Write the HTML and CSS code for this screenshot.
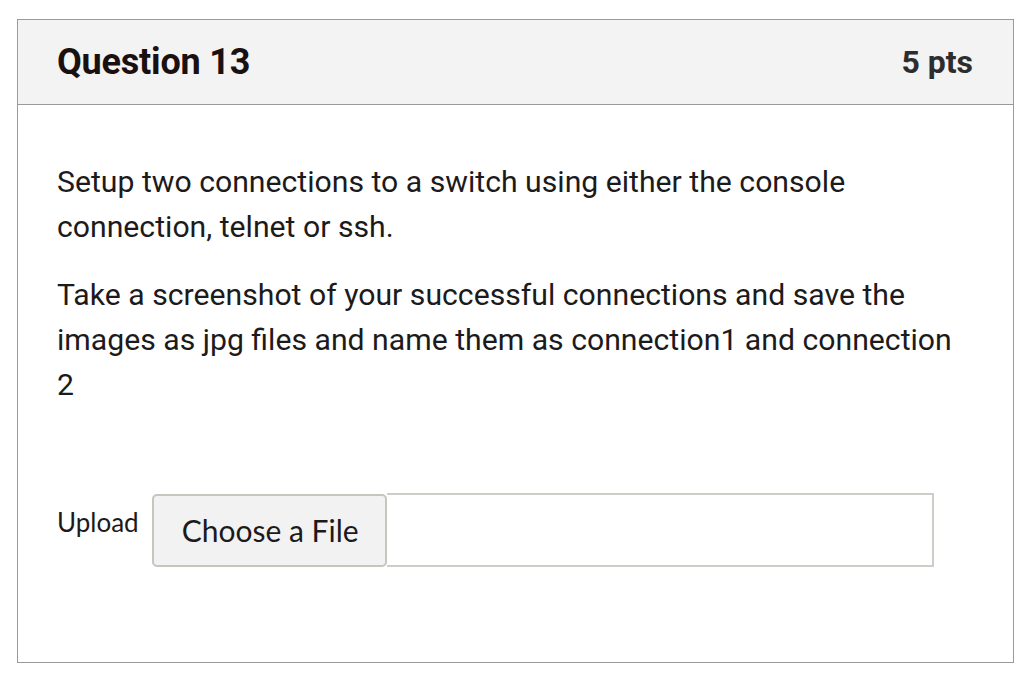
FILE: index.html
```html
<!DOCTYPE html>
<html>
<head>
<meta charset="utf-8">
<link rel="stylesheet" href="styles.css">
</head>
<body>
<div class="card">
  <div class="card-header">
    <h2 class="title">Question 13</h2>
    <span class="points">5 pts</span>
  </div>
  <div class="card-body">
    <p class="para">Setup two connections to a switch using either the console connection, telnet or ssh.</p>
    <p class="para">Take a screenshot of your successful connections and save the images as jpg files and name them as connection1 and connection 2</p>
    <div class="upload-row">
      <label class="upload-label">Upload</label>
      <div class="file-input">
        <span class="file-button">Choose a File</span>
        <span class="file-name"></span>
      </div>
    </div>
  </div>
</div>
</body>
</html>
```

FILE: styles.css
```css
html, body {
  margin: 0;
  padding: 0;
  background: #ffffff;
}

.card {
  margin: 19px 10px 0 17px;
  height: 642px;
  border: 1px solid #9a9a9a;
  box-sizing: content-box;
  display: flex;
  flex-direction: column;
}

.card-header {
  height: 84px;
  background: #f3f3f3;
  border-bottom: 1px solid #9a9a9a;
  display: flex;
  align-items: center;
  justify-content: space-between;
  padding: 0 40px 0 39px;
}

.title {
  margin: 0;
  font-family: Roboto, "Liberation Sans", sans-serif;
  font-weight: 700;
  font-size: 36px;
  color: #1a1010;
  letter-spacing: -0.2px;
}

.points {
  font-family: Roboto, "Liberation Sans", sans-serif;
  font-weight: 700;
  font-size: 32px;
  color: #2d2d2d;
}

.card-body {
  padding: 54px 55px 0 39px;
}

.para {
  margin: 0 0 23px 0;
  font-family: Roboto, "Liberation Sans", sans-serif;
  font-size: 30.2px;
  line-height: 45px;
  color: #1c1a1a;
}

.upload-row {
  display: flex;
  align-items: flex-start;
  gap: 13px;
  margin-top: 87px;
}

.upload-label {
  font-family: Lato, "Liberation Sans", sans-serif;
  font-size: 26px;
  color: #1c1a1a;
  padding-top: 12px;
}

.file-input {
  display: flex;
  width: 782px;
  height: 73px;
}

.file-button {
  display: flex;
  align-items: center;
  box-sizing: border-box;
  width: 235px;
  height: 73px;
  padding: 0 0 1px 28px;
  background: #f2f2f2;
  border: 2px solid #c8c5bf;
  border-radius: 5px;
  font-family: Lato, "Liberation Sans", sans-serif;
  font-size: 30px;
  color: #1c1a1a;
}

.file-name {
  flex: 1;
  box-sizing: border-box;
  height: 74px;
  margin-top: -1px;
  border: 2px solid #d0cdc8;
  border-left: none;
}
```
